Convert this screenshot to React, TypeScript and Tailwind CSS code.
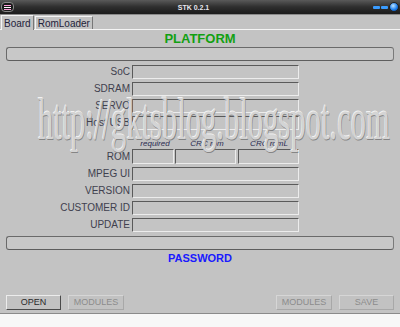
import React from "react";

const sans = { fontFamily: '"Liberation Sans", Arial, sans-serif' } as const;

function Field({ label, className = "" }: { label: string; className?: string }) {
    return (
        <div className={`flex items-center h-[14px] ${className}`}>
            <div className="w-[132px] pr-[2px] text-right text-[10px] leading-none text-[#40404e]">{label}</div>
            <div className="w-[167px] h-[14px] border border-t-[#5a5a5a] border-l-[#5a5a5a] border-b-[#ececec] border-r-[#ececec] bg-[#c4c4c4]" />
        </div>
    );
}

function Bar() {
    return <div className="mx-[6px] h-[14px] rounded-[3px] border border-t-[#6a6a6a] border-l-[#6a6a6a] border-b-[#5e5e5e] border-r-[#7a7a7a] bg-[#c8c8c8]" />;
}

function Btn({ label, disabled = false, w }: { label: string; disabled?: boolean; w: string }) {
    return (
        <div className={`${w} h-[15px] flex items-center justify-center text-[9px] leading-none border ${disabled ? "text-[#8c8c8c] border-[#d6d6d6] border-b-[#a8a8a8] border-r-[#a8a8a8]" : "text-[#2a2a2a] border-[#ececec] border-b-[#4a4a4a] border-r-[#4a4a4a]"} bg-[#c2c2c2]`}>
            {label}
        </div>
    );
}

export default function App() {
    return (
        <div className="w-[400px] h-[327px] bg-[#c3c3c3] flex flex-col relative overflow-hidden" style={sans}>
            {/* title bar */}
            <div className="h-[14px] bg-gradient-to-b from-[#5a5a5a] via-[#2e2e2e] to-[#1c1c1c] flex items-center relative">
                <div className="ml-[1px] w-[13px] h-[10px] rounded-[4px] bg-[#1a1a1a] border border-[#888] flex flex-col justify-center gap-[1px] px-[2px]">
                    <div className="h-[1px] bg-[#ff9ad8]" />
                    <div className="h-[1px] bg-white" />
                    <div className="h-[1px] bg-[#ff9ad8]" />
                </div>
                <div className="flex-1 text-center text-[7px] font-bold text-[#e8e8f0] leading-none">STK 0.2.1</div>
                <div className="flex items-center gap-[1px] mr-[1px]">
                    <div className="w-[7px] h-[3px] rounded-[1px] bg-[#3a9cff]" />
                    <div className="w-[7px] h-[3px] rounded-[1px] bg-[#3a9cff]" />
                    <div className="w-[10px] h-[10px] rounded-full bg-[radial-gradient(circle_at_40%_35%,#bfe4ff,#1d7ff0_55%,#0a3a80)] border border-[#222]" />
                </div>
            </div>
            <div className="h-[1px] bg-[#8a8a8a]" />

            {/* tabs */}
            <div className="h-[15px] flex items-end pl-[1px] border-b border-[#f4f4f4]">
                <div className="h-[15px] px-[2px] flex items-center text-[10px] text-[#22223a] border-t border-l border-[#f4f4f4] border-r border-r-[#777] bg-[#c3c3c3] -mb-[1px]">Board</div>
                <div className="h-[13px] px-[2px] ml-[1px] flex items-center text-[10px] text-[#22223a] border-t border-l border-[#f4f4f4] border-r border-r-[#777]">RomLoader</div>
            </div>

            <div className="text-center text-[13px] font-bold text-[#12a012] leading-none mt-[2px]">PLATFORM</div>
            <div className="mt-[2px]"><Bar /></div>

            <div className="flex flex-col gap-[3px] mt-[4px]">
                <Field label="SoC" />
                <Field label="SDRAM" />
                <Field label="SERVO" />
                <Field label="Host USB" />
            </div>

            <div className="flex h-[18px] items-end pl-[134px] text-[8px] italic text-[#2a2a50] leading-none">
                <div className="w-[42px] text-center">required</div>
                <div className="w-[62px] text-center">CRC rom</div>
                <div className="w-[62px] text-center">CRC romL</div>
            </div>
            <div className="flex items-center h-[15px] mt-[1px]">
                <div className="w-[132px] pr-[2px] text-right text-[10px] leading-none text-[#40404e]">ROM</div>
                <div className="w-[42px] h-[15px] border border-t-[#5a5a5a] border-l-[#5a5a5a] border-b-[#ececec] border-r-[#ececec]" />
                <div className="w-[61px] h-[15px] ml-[1px] border border-t-[#5a5a5a] border-l-[#5a5a5a] border-b-[#ececec] border-r-[#ececec]" />
                <div className="w-[61px] h-[15px] ml-[2px] border border-t-[#5a5a5a] border-l-[#5a5a5a] border-b-[#ececec] border-r-[#ececec]" />
            </div>

            <div className="flex flex-col gap-[3px] mt-[3px]">
                <Field label="MPEG UI" />
                <Field label="VERSION" />
                <Field label="CUSTOMER ID" />
                <Field label="UPDATE" />
            </div>

            <div className="mt-[4px]"><Bar /></div>
            <div className="text-center text-[11px] font-bold text-[#1a1aff] leading-none mt-[3px]">PASSWORD</div>

            <div className="flex-1" />
            <div className="flex px-[6px] gap-[7px]">
                <Btn label="OPEN" w="w-[55px]" />
                <Btn label="MODULES" w="w-[56px]" disabled />
                <div className="flex-1" />
                <Btn label="MODULES" w="w-[56px]" disabled />
                <Btn label="SAVE" w="w-[55px]" disabled />
            </div>
            <div className="h-[14px] mt-[3px] bg-[#f7f7f7] border-t border-[#8a8a8a]" />

            {/* watermark */}
            <div className="absolute left-[38px] top-[89px] pointer-events-none">
                <div
                    className="text-[60px] leading-none text-[#d4d4d4] origin-left scale-x-[0.51] whitespace-nowrap [text-shadow:1px_1px_0_#858585,-1px_-1px_0_#f2f2f2]"
                    style={{ fontFamily: '"Liberation Serif", "Times New Roman", serif' }}
                >
                    http://gktsblog.blogspot.com
                </div>
            </div>
        </div>
    );
}
